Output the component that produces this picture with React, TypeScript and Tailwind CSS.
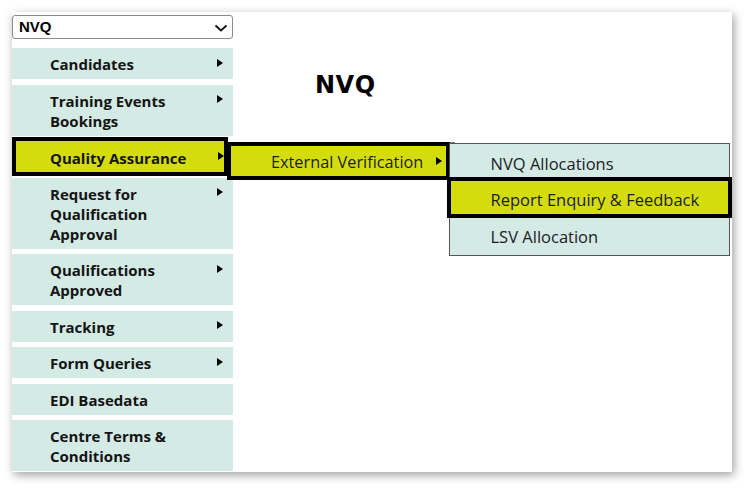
import React from 'react';

type MenuItem = { lines: string[]; arrow: boolean; active?: boolean };

const items: MenuItem[] = [
  { lines: ['Candidates'], arrow: true },
  { lines: ['Training Events', 'Bookings'], arrow: true },
  { lines: ['Quality Assurance'], arrow: true, active: true },
  { lines: ['Request for', 'Qualification', 'Approval'], arrow: true },
  { lines: ['Qualifications', 'Approved'], arrow: true },
  { lines: ['Tracking'], arrow: true },
  { lines: ['Form Queries'], arrow: true },
  { lines: ['EDI Basedata'], arrow: false },
  { lines: ['Centre Terms &', 'Conditions'], arrow: false },
];

const Arrow = ({ className }: { className: string }) => (
  <span
    className={`absolute h-0 w-0 border-y-[4.5px] border-y-transparent border-l-[6px] border-l-black ${className}`}
  />
);

const SideItem = ({ item }: { item: MenuItem }) => {
  if (item.active) {
    return (
      <div className="relative z-10 -my-[4px] h-[39px] w-[216px] overflow-hidden border-[4px] border-black bg-[#d4dc0c] pl-[34px] pt-[6.5px] text-[15px] font-bold leading-[20px] text-[#141414]">
        {item.lines.map((l) => (
          <div key={l}>{l}</div>
        ))}
        {item.arrow && <Arrow className="right-[0.5px] top-[11px]" />}
      </div>
    );
  }
  return (
    <div className="relative w-[221px] bg-[#d4eae4] pb-[5px] pl-[38px] pt-[6px] text-[15px] font-bold leading-[20px] text-[#141414]">
      {item.lines.map((l) => (
        <div key={l}>{l}</div>
      ))}
      {item.arrow && <Arrow className="right-[10px] top-[10.5px]" />}
    </div>
  );
};

export default function App() {
  return (
    <div className="min-h-screen bg-white p-[12px] font-['Open_Sans',sans-serif]">
      <div className="relative flex h-[460px] w-[720px] bg-white shadow-[2px_3px_9px_rgba(0,0,0,0.38)]">
        {/* left navigation */}
        <div className="flex w-[221px] flex-col pt-[3px]">
          <div className="relative flex h-[24px] items-center rounded-[3px] border border-[#8a8a8a] bg-white pl-[6px] font-['Liberation_Sans',Arial,sans-serif] text-[15px] font-bold text-black">
            NVQ
            <svg
              className="absolute left-[201px] top-[8px]"
              width="14"
              height="8"
              viewBox="0 0 14 8"
              fill="none"
            >
              <polyline points="1.5,1.5 7,6.5 12.5,1.5" stroke="#111" strokeWidth="1.8" />
            </svg>
          </div>
          <div className="mt-[9px] flex flex-col gap-[5.5px]">
            {items.map((it) => (
              <SideItem key={it.lines.join(' ')} item={it} />
            ))}
          </div>
        </div>

        {/* content */}
        <div className="ml-[82px] pt-[61px]">
          <h1 className="font-['DejaVu_Sans',sans-serif] text-[24px] font-bold leading-none tracking-[0.5px] text-black">
            NVQ
          </h1>
        </div>

        {/* second level flyout */}
        <div className="absolute left-[215px] top-[130px] z-20 h-[38px] w-[223px] border-[4px] border-black bg-[#d4dc0c] pl-[40px] pt-[6px] text-[16.3px] leading-[20px] text-[#1c1c28]">
          External Verification
          <Arrow className="left-[205px] top-[10.5px]" />
        </div>
        <div className="absolute left-[438px] top-[130px] h-px w-[5px] bg-[#777]" />

        {/* third level flyout */}
        <div className="absolute left-[437px] top-[130.5px] z-20 flex w-[281px] flex-col border border-[#555] bg-[#d4eae4] text-[16.5px] leading-[20px] text-[#1c1c28]">
          <div className="h-[33px] pl-[40.5px] pt-[10px]">NVQ Allocations</div>
          <div className="-mx-[3px] h-[41px] border-[4px] border-black bg-[#d4dc0c] pl-[39.5px] pt-[9px]">
            Report Enquiry &amp; Feedback
          </div>
          <div className="h-[37px] pl-[40.5px] pt-[9px]">LSV Allocation</div>
        </div>
      </div>
    </div>
  );
}
